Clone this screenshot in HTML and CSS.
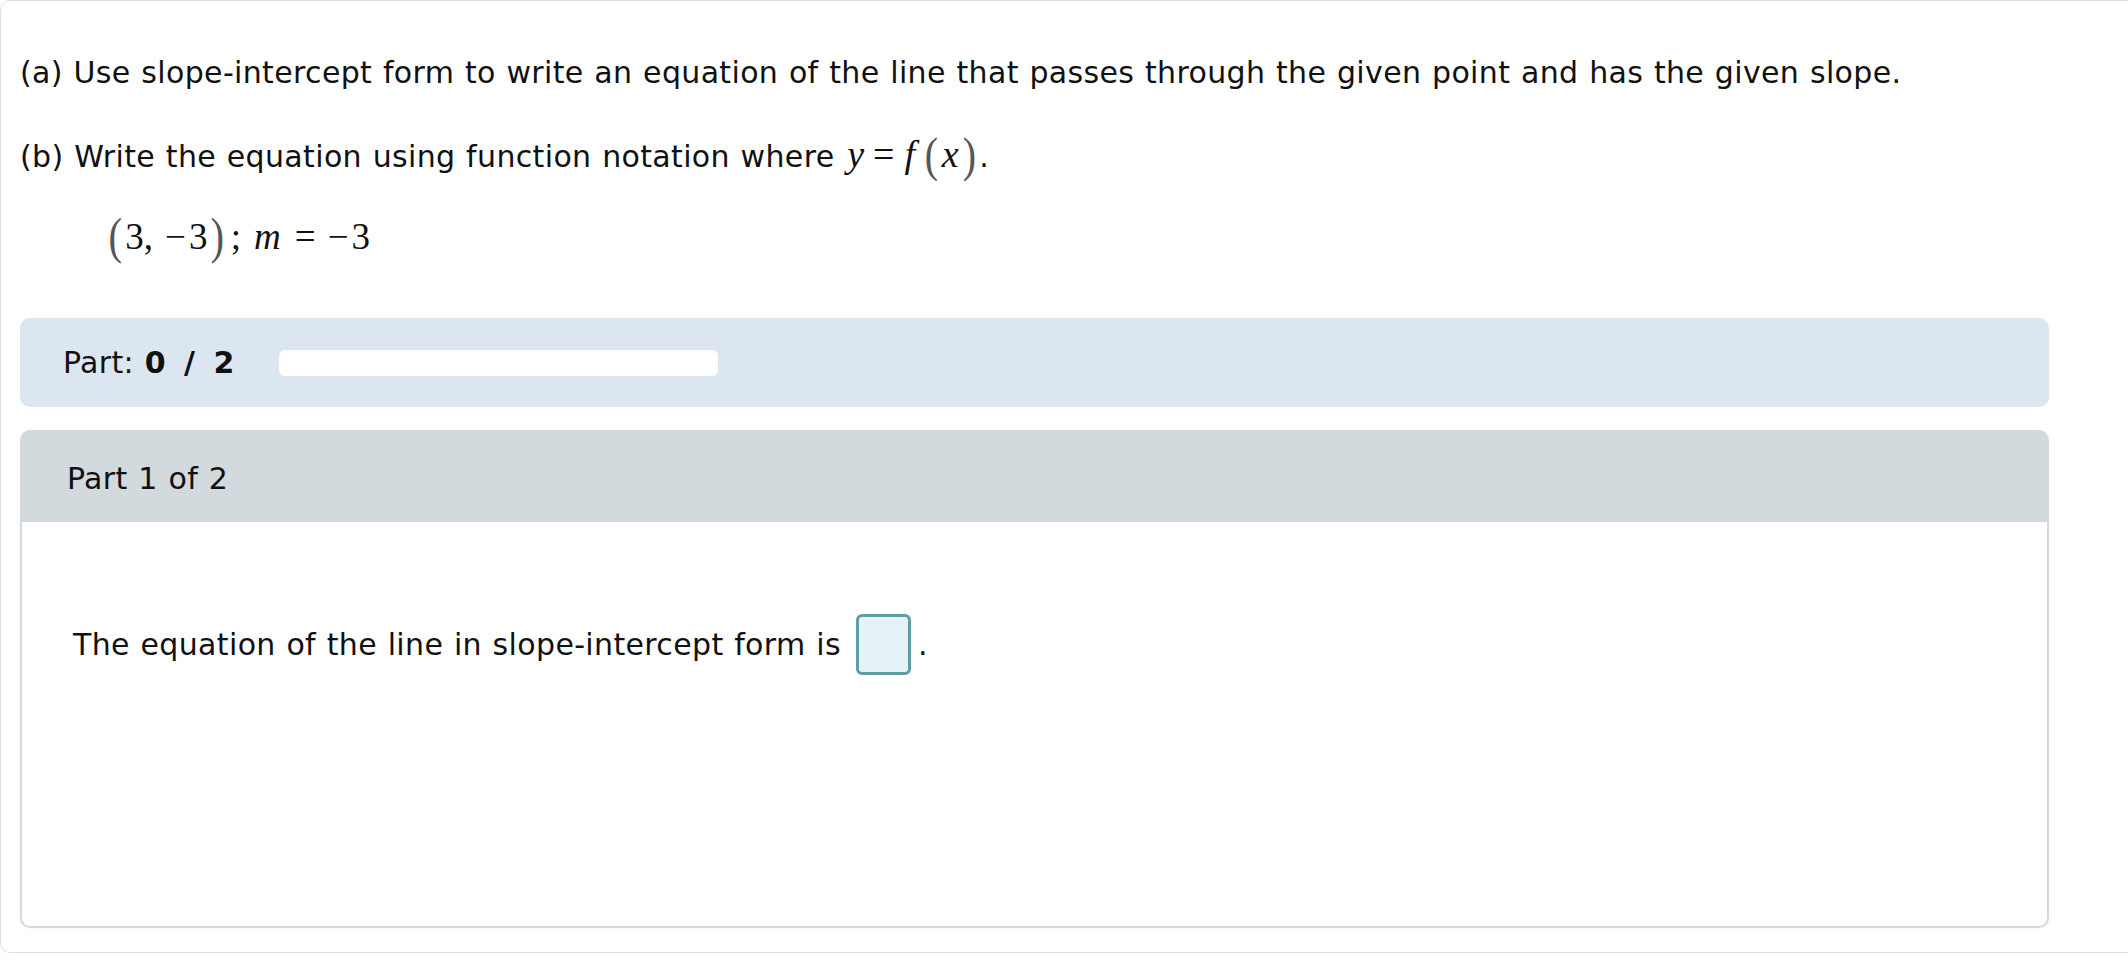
FILE: index.html
```html
<!DOCTYPE html>
<html>
<head>
<meta charset="utf-8">
<link rel="stylesheet" href="styles.css">
</head>
<body>
<div class="question">
  <p class="prompt prompt-a">(a) Use slope-intercept form to write an equation of the line that passes through the given point and has the given slope.</p>
  <p class="prompt prompt-b">(b) Write the equation using function notation where <span class="math inline-math"><i>y</i><span class="op">=</span><i class="f">f</i><span class="paren">(</span><i>x</i><span class="paren">)</span></span>.</p>
  <p class="given"><span class="math"><span class="paren big">(</span>3<span class="comma">,</span><span class="minus">−</span>3<span class="paren big">)</span><span class="semi">;</span><i class="m">m</i><span class="op">=</span><span class="minus">−</span>3</span></p>

  <div class="parts">
    <div class="progress-bar">
      <span class="progress-label">Part: <b>0 / 2</b></span>
      <span class="progress-track"></span>
    </div>

    <div class="panel">
      <div class="panel-header">Part 1 of 2</div>
      <div class="panel-body">
        <div class="answer-row">
          <span class="answer-text">The equation of the line in slope-intercept form is</span>
          <span class="answer-box"></span>
          <span class="answer-end">.</span>
        </div>
      </div>
    </div>
  </div>
</div>
</body>
</html>
```

FILE: styles.css
```css
html, body {
  margin: 0;
  padding: 0;
  background: #ffffff;
  overflow: hidden;
}

body {
  font-family: "DejaVu Sans", Verdana, sans-serif;
  color: #111111;
  letter-spacing: 0.35px;
  word-spacing: 0.8px;
}

.question {
  width: 2180px;
  height: 953px;
  box-sizing: border-box;
  border: 1px solid #dedede;
  border-radius: 10px;
  padding: 52px 0 0 19px;
}

.prompt {
  margin: 0;
  font-size: 30px;
  line-height: 40px;
  white-space: nowrap;
}

.prompt-b {
  margin-top: 44px;
}

.math {
  font-family: "Liberation Serif", "Times New Roman", serif;
  letter-spacing: 0;
  word-spacing: 0;
}

.inline-math {
  font-size: 38px;
  line-height: 20px;
  margin-left: 2px;
}

.inline-math .op {
  margin: 0 10px 0 9px;
}

.inline-math .f {
  margin-right: 6px;
}

.paren {
  color: #555555;
  font-style: normal;
  display: inline-block;
  transform: scale(1.05, 1.3);
  margin: 0 4px;
}

.given {
  margin: 35px 0 0 85px;
  font-size: 37px;
  line-height: 50px;
  height: 50px;
  color: #111111;
}

.given .paren.big {
  transform: scale(1.1, 1.35);
  margin: 0 4px;
}

.given .comma {
  margin-right: 12px;
}

.given .minus {
  margin-right: 3px;
}

.given .semi {
  margin: 0 13px 0 3px;
}

.given .op {
  margin: 0 12px;
}

.given .m {
  margin-right: 2px;
}

.parts {
  width: 2029px;
  margin-top: 56px;
}

.progress-bar {
  height: 89px;
  background: #dbe6f0;
  border-radius: 10px;
  display: flex;
  align-items: center;
  padding-left: 43px;
  font-size: 30px;
  line-height: 40px;
}

.progress-label b {
  font-weight: bold;
  letter-spacing: 1.5px;
  word-spacing: 5px;
}

.progress-track {
  display: block;
  width: 439px;
  height: 26px;
  margin-left: 43px;
  background: #ffffff;
  border-radius: 6px;
}

.panel {
  margin-top: 23px;
  border-radius: 10px;
  box-shadow: 0 0 6px rgba(0, 0, 0, 0.03);
}

.panel-header {
  height: 92px;
  box-sizing: border-box;
  background: #d2dade;
  border-radius: 10px 10px 0 0;
  padding: 29px 0 0 47px;
  font-size: 30px;
  line-height: 40px;
}

.panel-body {
  height: 406px;
  box-sizing: border-box;
  background: #ffffff;
  border: 2px solid #d8d8d8;
  border-top: none;
  border-radius: 0 0 10px 10px;
  padding: 92px 0 0 51px;
}

.answer-row {
  display: flex;
  align-items: center;
  height: 61px;
  font-size: 30px;
  line-height: 40px;
}

.answer-box {
  display: block;
  width: 55px;
  height: 61px;
  box-sizing: border-box;
  margin-left: 15px;
  border: 3px solid #5f9ca8;
  border-radius: 6px;
  background: #e5f3f8;
}

.answer-end {
  margin-left: 7px;
}
```
